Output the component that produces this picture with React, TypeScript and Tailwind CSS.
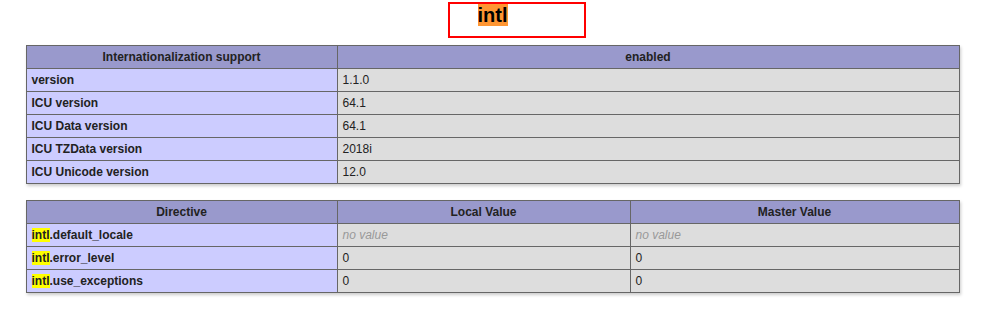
const rows: [string, string][] = [
  ["version", "1.1.0"],
  ["ICU version", "64.1"],
  ["ICU Data version", "64.1"],
  ["ICU TZData version", "2018i"],
  ["ICU Unicode version", "12.0"],
];

const directives: [string, string | null, string | null][] = [
  ["default_locale", null, null],
  ["error_level", "0", "0"],
  ["use_exceptions", "0", "0"],
];

function Val({ v }: { v: string | null }) {
  if (v === null) return <i className="text-[#999]">no value</i>;
  return <>{v}</>;
}

const th = "border border-[#666] bg-[#9999cc] px-[5px] py-1 font-bold text-center align-baseline";
const e = "border border-[#666] bg-[#ccccff] px-[5px] py-1 font-bold text-left align-baseline";
const v = "border border-[#666] bg-[#dddddd] px-[5px] py-1 text-left align-baseline";

export default function App() {
  return (
    <div className="min-h-[309px] bg-white text-[#222] font-['Liberation_Sans',Arial,sans-serif]">
      <div className="relative pt-1 text-center">
        <h2 className="text-[20px] font-bold leading-[23px]">
          <span className="bg-[#ff9632] text-black">intl</span>
        </h2>
        <div className="absolute left-[448px] top-[2px] h-[36px] w-[138px] border-2 border-[#ff0000]" />
      </div>

      <table className="mx-auto mt-[18px] w-[934px] border-collapse text-[12px] leading-[14px] shadow-[1px_2px_3px_#ccc]">
        <thead>
          <tr>
            <th className={`${th} w-[311px]`}>Internationalization support</th>
            <th className={th}>enabled</th>
          </tr>
        </thead>
        <tbody>
          {rows.map(([k, val]) => (
            <tr key={k}>
              <td className={e}>{k}</td>
              <td className={v}>{val}</td>
            </tr>
          ))}
        </tbody>
      </table>

      <table className="mx-auto mt-[16px] w-[934px] border-collapse text-[12px] leading-[14px] shadow-[1px_2px_3px_#ccc]">
        <thead>
          <tr>
            <th className={`${th} w-[311px]`}>Directive</th>
            <th className={`${th} w-[293px]`}>Local Value</th>
            <th className={th}>Master Value</th>
          </tr>
        </thead>
        <tbody>
          {directives.map(([k, local, master]) => (
            <tr key={k}>
              <td className={e}>
                <span className="bg-[#ffff00]">intl</span>.{k}
              </td>
              <td className={v}>
                <Val v={local} />
              </td>
              <td className={v}>
                <Val v={master} />
              </td>
            </tr>
          ))}
        </tbody>
      </table>
    </div>
  );
}
